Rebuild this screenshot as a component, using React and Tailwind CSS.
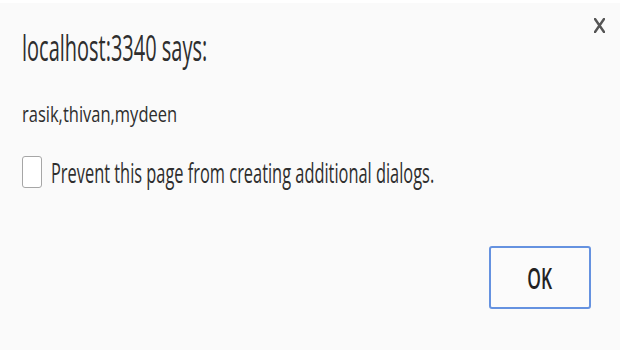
export default function App() {
  return (
    <div className="w-[620px] h-[350px] bg-[#fafafa] border-t-[3px] border-white flex flex-col pl-[22px] font-['Open_Sans',sans-serif] text-[#2e2e2e] overflow-hidden">
      {/* header */}
      <div className="flex justify-between items-start pr-[15px]">
        <h1 className="mt-[27px] text-[36px] leading-none whitespace-nowrap origin-left scale-x-[0.555]">
          localhost:3340 says:
        </h1>
        <button className="mt-[15px] w-[11px] h-[15px] text-[#555]" aria-label="Close">
          <svg width="11" height="15" viewBox="0 0 11 15">
            <path d="M1 1 L10 14 M10 1 L1 14" stroke="currentColor" strokeWidth="2.4" strokeLinecap="round" />
          </svg>
        </button>
      </div>

      {/* message */}
      <p className="mt-[36px] text-[22px] leading-none whitespace-nowrap origin-left scale-x-[0.75]">
        rasik,thivan,mydeen
      </p>

      {/* checkbox */}
      <label className="mt-[32px] flex items-center gap-[9px] h-[32px]">
        <span className="w-[20px] h-[32px] bg-white border border-[#a6a6a6] rounded-[3px] shrink-0" />
        <span className="text-[28px] leading-none whitespace-nowrap origin-left scale-x-[0.585]">
          Prevent this page from creating additional dialogs.
        </span>
      </label>

      {/* buttons */}
      <div className="mt-[58px] flex justify-end pr-[29px]">
        <button className="w-[102px] h-[63px] border-2 border-[#6592e0] rounded-[3px] bg-[#fbfbfb] flex items-center justify-center">
          <span className="text-[29px] leading-none font-semibold text-[#222] scale-x-[0.6]">OK</span>
        </button>
      </div>
    </div>
  );
}
